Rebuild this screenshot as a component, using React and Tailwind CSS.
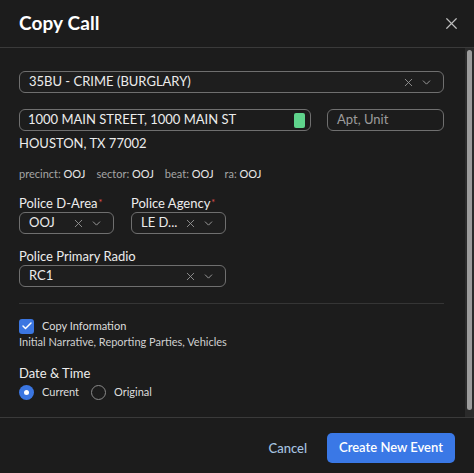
import { X, ChevronDown, Check } from "lucide-react";

const SelectBox = ({ value, className = "" }) => (
  <div
    className={`flex items-center h-[22px] rounded-[6px] border border-[#6f6f6f] bg-[#1e1e1e] pl-[9px] pr-[10px] ${className}`}
  >
    <span className="flex-1 truncate text-[13px] text-[#ececec]">{value}</span>
    <X className="h-[13px] w-[13px] text-[#9a9a9a] mr-[5px]" strokeWidth={1.6} />
    <ChevronDown className="h-[13px] w-[13px] text-[#9a9a9a]" strokeWidth={1.8} />
  </div>
);

const Label = ({ children, required }) => (
  <div className="text-[13px] leading-[16px] text-[#ededed] mb-[1px]">
    {children}
    {required && <span className="text-[#e05252] text-[9px] align-top ml-[1px]">*</span>}
  </div>
);

export default function App() {
  return (
    <div
      className="w-[474px] h-[473px] bg-[#1c1c1c] flex flex-col text-white overflow-hidden"
      style={{ fontFamily: "Lato, 'Open Sans', sans-serif" }}
    >
      <div className="h-[48px] flex items-center justify-between pl-[19px] pr-[13px] border-b border-[#3a3a3a] shrink-0">
        <div className="text-[19px] font-bold tracking-[0.1px]">Copy Call</div>
        <X className="h-[19px] w-[19px] text-[#bdbdbd]" strokeWidth={1.5} />
      </div>

      <div className="flex-1 flex min-h-0">
        <div className="flex-1 pl-[19px] pr-[21px] pt-[23px]">
          <SelectBox value="35BU - CRIME (BURGLARY)" />

          <div className="flex gap-[16px] mt-[16px]">
            <div className="w-[292px] h-[22px] rounded-[6px] border border-[#6f6f6f] flex items-center pl-[8px] pr-[5px]">
              <span className="flex-1 text-[13px] text-[#ececec]">1000 MAIN STREET, 1000 MAIN ST</span>
              <span className="w-[11px] h-[15px] rounded-[2px] bg-[#5fd48c]" />
            </div>
            <div className="flex-1 h-[22px] rounded-[6px] border border-[#6f6f6f] flex items-center pl-[9px]">
              <span className="text-[13px] text-[#9c9c9c]">Apt, Unit</span>
            </div>
          </div>
          <div className="text-[13px] text-[#ececec] mt-[3px]">HOUSTON, TX 77002</div>

          <div className="flex gap-[11px] text-[11px] mt-[12px]">
            <span><span className="text-[#a5a5a5]">precinct:</span> <span className="text-[#e8e8e8]">OOJ</span></span>
            <span><span className="text-[#a5a5a5]">sector:</span> <span className="text-[#e8e8e8]">OOJ</span></span>
            <span><span className="text-[#a5a5a5]">beat:</span> <span className="text-[#e8e8e8]">OOJ</span></span>
            <span><span className="text-[#a5a5a5]">ra:</span> <span className="text-[#e8e8e8]">OOJ</span></span>
          </div>

          <div className="flex gap-[17px] mt-[13px]">
            <div className="w-[95px]">
              <Label required>Police D-Area</Label>
              <SelectBox value="OOJ" />
            </div>
            <div className="w-[95px]">
              <Label required>Police Agency</Label>
              <SelectBox value="LE D..." />
            </div>
          </div>

          <div className="w-[207px] mt-[14px]">
            <Label>Police Primary Radio</Label>
            <SelectBox value="RC1" />
          </div>

          <div className="h-px bg-[#353535] mt-[16px]" />

          <div className="flex items-center gap-[8px] mt-[14px]">
            <span className="w-[15px] h-[15px] rounded-[3px] bg-[#3b76e1] flex items-center justify-center">
              <Check className="h-[12px] w-[12px] text-white" strokeWidth={3} />
            </span>
            <span className="text-[11px] text-[#dcdcdc]">Copy Information</span>
          </div>
          <div className="text-[11px] leading-[14px] text-[#d0d0d0]">
            Initial Narrative, Reporting Parties, Vehicles
          </div>

          <div className="text-[13px] text-[#ededed] mt-[15px]">Date &amp; Time</div>
          <div className="flex items-center text-[11px] text-[#dcdcdc] mt-[1px]">
            <span className="w-[15px] h-[15px] rounded-full bg-[#3b76e1] flex items-center justify-center">
              <span className="w-[5px] h-[5px] rounded-full bg-white" />
            </span>
            <span className="ml-[8px]">Current</span>
            <span className="w-[15px] h-[15px] rounded-full border-[1.5px] border-[#8a8a8a] ml-[12px]" />
            <span className="ml-[8px]">Original</span>
          </div>
        </div>
        <div className="w-[9px] bg-[#2a2a2a] flex justify-center pt-[2px] pb-[7px]">
          <div className="w-[5px] h-full rounded-full bg-[#9c9c9c]" />
        </div>
      </div>

      <div className="h-[56px] border-t border-[#3a3a3a] flex items-start justify-end gap-[20px] pr-[19px] pt-[15px] shrink-0">
        <span className="text-[13px] leading-[30px] text-[#a6c3e0] font-medium">Cancel</span>
        <button className="h-[30px] w-[128px] rounded-[5px] bg-[#3a78e6] text-[13px] font-semibold text-white">
          Create New Event
        </button>
      </div>
    </div>
  );
}
